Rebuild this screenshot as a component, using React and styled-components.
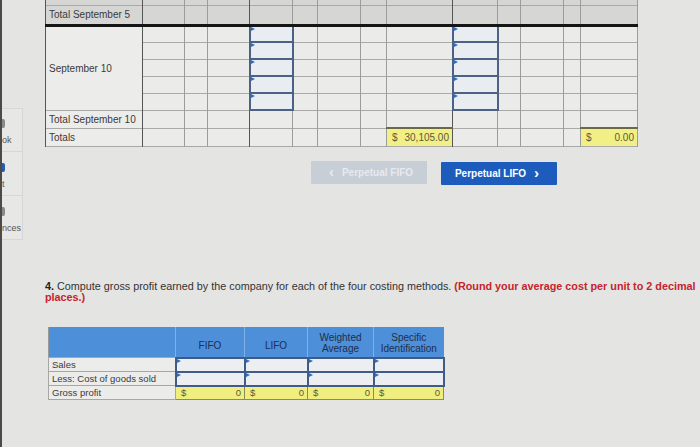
import React from 'react';
import styled, { createGlobalStyle } from 'styled-components';

const GlobalStyle = createGlobalStyle`
  html, body {
    margin: 0;
    padding: 0;
    background: #e4e4e2;
  }
  body {
    font-family: 'Liberation Sans', Arial, sans-serif;
    color: #333;
    overflow: hidden;
  }
`;

const topCols = [97, 42, 23, 42, 43, 25, 43, 26, 66, 45, 23, 43, 17, 57];
const inputCols = [4, 9];
const heavyCols = [0, 3, 8];

const sideItems = [
  { key: 'ebook', text: 'ok' },
  { key: 'print', text: 't', active: true },
  { key: 'refs', text: 'nces' }
];

const bottomCols = [
  { key: 'fifo', label: 'FIFO' },
  { key: 'lifo', label: 'LIFO' },
  { key: 'wa', label: ['Weighted', 'Average'] },
  { key: 'si', label: ['Specific', 'Identification'] }
];

function Marker() {
  return (
    <Tri viewBox="0 0 4 4">
      <path d="M0 0 L4 2 L0 4 Z" />
    </Tri>
  );
}

function TopRow({ label, kind, rowSpan, showLabel, inputs, totals }) {
  return (
    <Row kind={kind}>
      {showLabel && (
        <LabelCell rowSpan={rowSpan} kind={kind}>
          {label}
        </LabelCell>
      )}
      {topCols.slice(1).map((w, i) => {
        const col = i + 1;
        const total = totals && totals[col];
        if (total) {
          return (
            <TotalCell key={col} heavy={heavyCols.includes(col)}>
              <span>$</span>
              <span>{total}</span>
            </TotalCell>
          );
        }
        if (inputs && inputCols.includes(col)) {
          return (
            <InputCell key={col}>
              <Marker />
            </InputCell>
          );
        }
        return <Cell key={col} heavy={heavyCols.includes(col)} />;
      })}
    </Row>
  );
}

export default function App() {
  return (
    <Page>
      <GlobalStyle />
      <Sidebar>
        {sideItems.map((s) => (
          <SideItem key={s.key}>
            <SideIcon active={s.active} />
            <SideText>{s.text}</SideText>
          </SideItem>
        ))}
      </Sidebar>

      <Main>
        <TopTable>
          <colgroup>
            {topCols.map((w, i) => (
              <col key={i} style={{ width: w }} />
            ))}
          </colgroup>
          <tbody>
            <TopRow kind="partial" showLabel label="" />
            <TopRow kind="subtotal" showLabel label="Total September 5" />
            {[0, 1, 2, 3, 4].map((r) => (
              <TopRow
                key={r}
                kind="entry"
                showLabel={r === 0}
                rowSpan={5}
                label="September 10"
                inputs
              />
            ))}
            <TopRow kind="plain" showLabel label="Total September 10" />
            <TopRow
              kind="plain"
              showLabel
              label="Totals"
              totals={{ 8: '30,105.00', 13: '0.00' }}
            />
          </tbody>
        </TopTable>

        <NavRow>
          <NavButton disabled>
            <Chevron>‹</Chevron> Perpetual FIFO
          </NavButton>
          <NavButton primary>
            Perpetual LIFO <Chevron>›</Chevron>
          </NavButton>
        </NavRow>

        <Question>
          <b>4.</b> Compute gross profit earned by the company for each of the
          four costing methods. <Red>(Round your average cost per unit to 2 decimal</Red>
          <br />
          <Red>places.)</Red>
        </Question>

        <ProfitTable>
          <colgroup>
            <col style={{ width: 127 }} />
            <col style={{ width: 69 }} />
            <col style={{ width: 63 }} />
            <col style={{ width: 66 }} />
            <col style={{ width: 70 }} />
          </colgroup>
          <thead>
            <tr>
              <HeadCell />
              {bottomCols.map((c) => (
                <HeadCell key={c.key} twoLine={Array.isArray(c.label)}>
                  {Array.isArray(c.label) ? (
                    <>
                      {c.label[0]}
                      <br />
                      {c.label[1]}
                    </>
                  ) : (
                    c.label
                  )}
                </HeadCell>
              ))}
            </tr>
          </thead>
          <tbody>
            {['Sales', 'Less: Cost of goods sold'].map((l) => (
              <tr key={l}>
                <RowLabel>{l}</RowLabel>
                {bottomCols.map((c) => (
                  <ProfitInput key={c.key}>
                    <Marker />
                  </ProfitInput>
                ))}
              </tr>
            ))}
            <tr>
              <RowLabel>Gross profit</RowLabel>
              {bottomCols.map((c) => (
                <ProfitTotal key={c.key}>
                  <span>$</span>
                  <span>0</span>
                </ProfitTotal>
              ))}
            </tr>
          </tbody>
        </ProfitTable>
      </Main>
    </Page>
  );
}

const Page = styled.div`
  display: flex;
  width: 700px;
  height: 447px;
  overflow: hidden;
  border-left: 2px solid #4a4a4a;
  box-sizing: border-box;
`;

const Sidebar = styled.div`
  width: 21px;
  flex: none;
  padding-top: 108px;
  overflow: hidden;
  display: flex;
  flex-direction: column;
`;

const SideItem = styled.div`
  height: 44px;
  border: 1px solid #d6d6d4;
  border-left: none;
  border-top: none;
  background: #e7e7e5;
  display: flex;
  flex-direction: column;
  align-items: flex-start;
  justify-content: flex-end;
  padding-bottom: 6px;
  box-sizing: border-box;
  overflow: hidden;

  &:first-child {
    border-top: 1px solid #d6d6d4;
  }
`;

const SideIcon = styled.div`
  width: 3px;
  height: 9px;
  margin: 0 0 7px 0;
  background: ${(p) => (p.active ? '#2a5aa8' : '#8a8a8a')};
  border-radius: 0 2px 2px 0;
`;

const SideText = styled.div`
  font-size: 9px;
  color: #555;
  white-space: nowrap;
`;

const Main = styled.div`
  flex: 1;
  padding-left: 22px;
  display: flex;
  flex-direction: column;
`;

const TopTable = styled.table`
  border-collapse: collapse;
  table-layout: fixed;
  width: 592px;
  margin-top: -10px;
  border-right: 1.5px solid #555;
`;

const Row = styled.tr`
  height: ${(p) =>
    p.kind === 'partial' ? 15 : p.kind === 'subtotal' ? 20 : p.kind === 'entry' ? 17 : 18}px;
  background: ${(p) => (p.kind === 'subtotal' || p.kind === 'partial' ? '#d6d6d4' : '#ebebe9')};
  border-bottom: ${(p) => (p.kind === 'subtotal' ? '3px solid #151515' : '1px solid #a9a9a7')};
`;

const LabelCell = styled.td`
  font-size: 10px;
  color: #3a3a3a;
  padding: 0 3px;
  vertical-align: ${(p) => (p.kind === 'plain' ? 'top' : 'middle')};
  padding-top: ${(p) => (p.kind === 'plain' ? '3px' : '0')};
  border-left: 1.5px solid #555;
  border-right: 1.5px solid #555;
  white-space: nowrap;
  background: ${(p) => (p.kind === 'subtotal' || p.kind === 'partial' ? '#d6d6d4' : '#ececea')};
`;

const Cell = styled.td`
  border-right: ${(p) => (p.heavy ? '1.5px solid #555' : '1px solid #9c9c9a')};
`;

const InputCell = styled.td`
  position: relative;
  background: #e9ecf1;
  border: 2px solid #4c6186;
`;

const Tri = styled.svg`
  position: absolute;
  left: 0;
  top: 0;
  width: 4px;
  height: 4px;
  fill: #2f6cc2;
`;

const TotalCell = styled.td`
  background: #f1ef86;
  border-top: 2px solid #6b6a48;
  border-right: ${(p) => (p.heavy ? '1.5px solid #555' : '1px solid #9c9c9a')};
  font-size: 10px;
  color: #5b5a3a;
  padding: 0 3px 0 5px;

  & > span:first-child {
    float: left;
  }
  & > span:last-child {
    float: right;
  }
`;

const NavRow = styled.div`
  display: flex;
  gap: 14px;
  margin-top: 14px;
  padding-left: 266px;
`;

const NavButton = styled.div`
  width: 116px;
  height: 23px;
  display: flex;
  align-items: center;
  justify-content: center;
  gap: 4px;
  font-size: 10px;
  font-weight: bold;
  border-radius: 1px;
  background: ${(p) => (p.primary ? '#1d5cbc' : '#c8ced6')};
  color: ${(p) => (p.primary ? '#ffffff' : '#e6eaef')};
  margin-top: ${(p) => (p.primary ? '1px' : '0')};
`;

const Chevron = styled.span`
  font-size: 15px;
  line-height: 10px;
  margin: 0 4px;
`;

const Question = styled.p`
  margin: 96px 0 0;
  font-size: 10.8px;
  line-height: 11px;
  color: #333;
  white-space: nowrap;

  b {
    color: #222;
  }
`;

const Red = styled.span`
  color: #c4242f;
  font-weight: bold;
`;

const ProfitTable = styled.table`
  border-collapse: collapse;
  table-layout: fixed;
  width: 395px;
  margin: 24px 0 0 3px;
  border-left: 1px solid #9a9a98;
`;

const HeadCell = styled.th`
  box-sizing: border-box;
  height: 31px;
  background: #4d8fd8;
  border-left: 1px solid #7fb0e6;
  color: #1e2e4e;
  font-size: 10px;
  font-weight: normal;
  line-height: 11px;
  vertical-align: ${(p) => (p.twoLine ? 'bottom' : 'middle')};
  padding: ${(p) => (p.twoLine ? '0 0 3px' : '7px 0 0')};
  text-align: center;

  &:first-child {
    border-left: none;
  }
`;

const RowLabel = styled.td`
  height: 13px;
  font-size: 9.5px;
  color: #3a3a3a;
  padding: 0 3px;
  background: #ececea;
  border: 1px solid #a6a6a4;
  white-space: nowrap;
`;

const ProfitInput = styled.td`
  position: relative;
  background: #eceef2;
  border: 2px solid #3f5b8a;
`;

const ProfitTotal = styled.td`
  background: #f0ee7e;
  border: 1px solid #8c8b55;
  border-top: 2px solid #5e5d3a;
  font-size: 9.5px;
  color: #5b5a3a;
  padding: 0 3px 0 5px;

  & > span:first-child {
    float: left;
  }
  & > span:last-child {
    float: right;
  }
`;
